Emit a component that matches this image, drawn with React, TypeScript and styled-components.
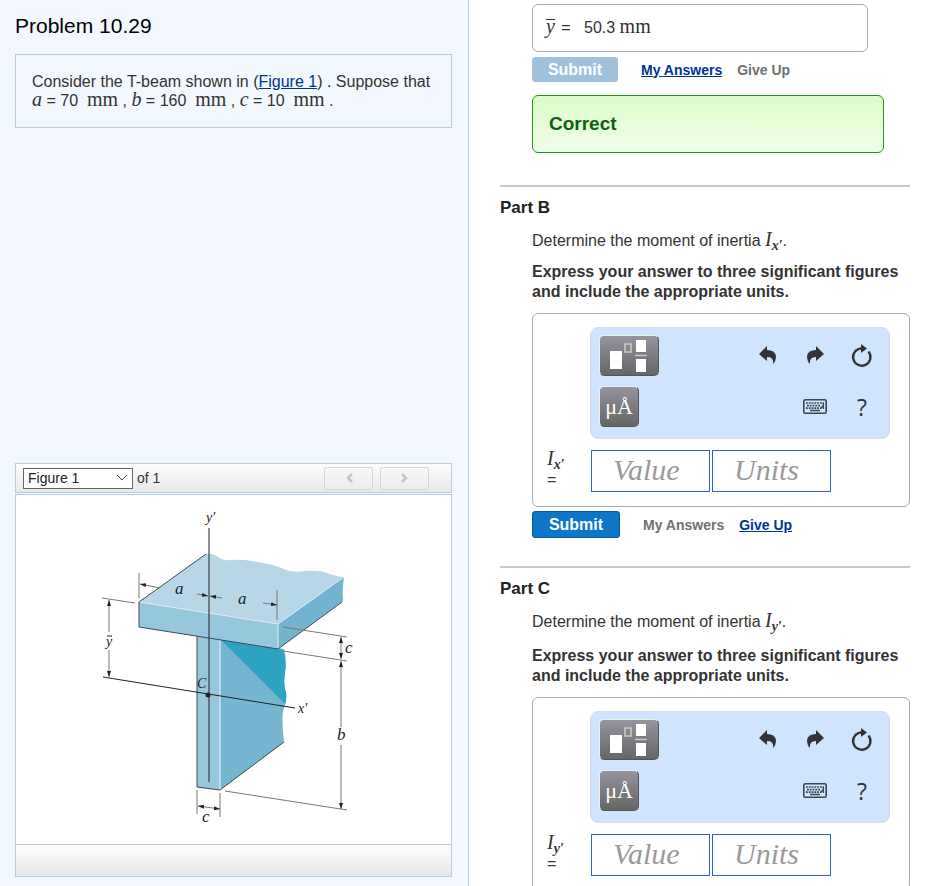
import React from "react";
import styled, { createGlobalStyle } from "styled-components";

const GlobalStyle = createGlobalStyle`
  *, *::before, *::after { box-sizing: border-box; }
  body {
    margin: 0;
    background: #fff;
    color: #333;
    font-family: "Liberation Sans", Arial, sans-serif;
    font-size: 16px;
    line-height: 20px;
  }
  button, input, select { font-family: inherit; margin: 0; }
  h1, h2, p { margin: 0; }
`;

const Page = styled.div`
  display: grid;
  grid-template-columns: minmax(0, 469fr) minmax(0, 463fr);
  height: 100vh;
  overflow: hidden;
`;

const ProblemPane = styled.aside`
  display: flex;
  flex-direction: column;
  justify-content: space-between;
  padding: 14px 16px 9px 15px;
  background: #f3f8fe;
  border-right: 1px solid #b8cbdd;
`;

const Title = styled.h1`
  color: #000;
  font-size: 21px;
  font-weight: 400;
  line-height: 24px;
`;

const Statement = styled.p`
  margin-top: 16px;
  padding: 17px 16px;
  border: 1px solid #b8cde0;
  line-height: 19px;
`;

const TextLink = styled.a`
  color: #039;
  text-decoration: underline;
`;

const Unit = styled.span`
  font-family: "Liberation Serif", "Times New Roman", serif;
  font-size: 20px;
  line-height: 0;
`;

const Variable = styled(Unit)`
  font-style: italic;
`;

const Subscript = styled.sub`
  font-size: 14px;
  font-weight: 700;
  line-height: 0;
  vertical-align: -4px;
`;

const Overlined = styled(Variable)`
  display: inline-block;
  margin-right: 2px;
  border-top: 1px solid #333;
  line-height: 13px;
`;

const Toolbar = styled.div`
  display: flex;
  align-items: center;
  height: 30px;
  margin-bottom: 1px;
  padding: 0 22px 0 7px;
  border: 1px solid #b8cde0;
  background: linear-gradient(#fdfdfd, #e8e8e8);
  font-size: 14px;
`;

const SelectWrap = styled.span`
  display: grid;
  align-items: center;
  width: 110px;
  margin-right: 4px;

  > * { grid-area: 1 / 1; }
  > svg { justify-self: end; margin-right: 5px; pointer-events: none; }
`;

const FigureSelect = styled.select`
  appearance: none;
  width: 100%;
  height: 21px;
  padding: 0 4px;
  border: 1px solid #666;
  border-radius: 0;
  background: #fff;
  color: #222;
  font-size: 14px;
`;

const Pager = styled.div`
  display: flex;
  gap: 7px;
  margin-left: auto;
`;

const PagerButton = styled.button`
  display: flex;
  align-items: center;
  justify-content: center;
  width: 49px;
  height: 23px;
  padding: 0;
  border: 1px solid #d8d8d8;
  border-radius: 2px;
  background: linear-gradient(#f8f8f8, #ededed);
`;

const Canvas = styled.div`
  border: 1px solid #b8cde0;
  background: #fff;

  svg { display: block; width: 100%; height: 349px; }
`;

const FigureFooter = styled.div`
  height: 32px;
  border: 1px solid #b8cde0;
  border-top: 0;
  background: linear-gradient(#fdfdfd, #e8e8e8);
`;

const WorkPane = styled.main`
  padding: 4px 22px 0 31px;
  overflow: hidden;
`;

const Indented = styled.div`
  margin-left: 32px;
`;

const GivenAnswer = styled.div`
  display: flex;
  align-items: baseline;
  max-width: 336px;
  height: 48px;
  padding: 13px;
  border: 1px solid #aaa;
  border-radius: 6px;
  white-space: pre;
`;

const Actions = styled.div<{ $gap: number }>`
  display: flex;
  align-items: center;
  gap: 15px;
  margin-top: ${(p) => p.$gap}px;
  font-size: 14px;
  font-weight: 700;
`;

const Submit = styled.button`
  width: 88px;
  height: 27px;
  margin-right: 8px;
  padding: 0;
  border: 1px solid #075a99;
  border-radius: 3px;
  background: #0e76c9;
  color: #fff;
  font-size: 16px;
  font-weight: 700;
  line-height: 20px;

  &:disabled {
    width: 86px;
    height: 25px;
    border-color: #9fc1db;
    background: #9fc1db;
  }
`;

const Muted = styled.span`
  color: #707070;
`;

const Feedback = styled.div`
  display: flex;
  align-items: center;
  max-width: 352px;
  height: 58px;
  margin-top: 13px;
  padding-left: 16px;
  border: 1px solid #1d9a1d;
  border-radius: 6px;
  background: linear-gradient(#dcfcc8, #f1fdea);
  color: #0d600d;
  font-size: 19px;
  font-weight: 700;
`;

const PartSection = styled.section<{ $gap: number }>`
  margin-top: ${(p) => p.$gap}px;
  border-top: 2px solid #c9c9c9;
`;

const PartTitle = styled.h2`
  margin-top: 11px;
  color: #222;
  font-size: 17px;
  line-height: 20px;
`;

const Prompt = styled.p<{ $after: number }>`
  margin-top: 13px;
  margin-bottom: ${(p) => p.$after}px;
`;

const Instruction = styled.p`
  font-weight: 700;
`;

const AnswerBox = styled.div`
  display: grid;
  grid-template-columns: 45px minmax(0, 300px);
  row-gap: 11px;
  margin-top: 11px;
  padding: 13px 19px 14px 12px;
  border: 1px solid #aaa;
  border-radius: 6px;
`;

const Palette = styled.div`
  display: flex;
  flex-direction: column;
  grid-column: 2;
  gap: 10px;
  height: 112px;
  padding: 7px 12px 7px 8px;
  border: 1px solid #d9dce2;
  border-radius: 8px;
  background: #cfe4fe;
`;

const PaletteRow = styled.div`
  display: flex;
  align-items: center;
`;

const Tools = styled.div`
  display: flex;
  gap: 17px;
  margin-left: auto;
`;

const PaletteButton = styled.button<{ $width: number }>`
  display: flex;
  align-items: center;
  justify-content: center;
  width: ${(p) => p.$width}px;
  height: 41px;
  padding: 0;
  border: 1px solid;
  border-color: #eee #555 #555 #eee;
  border-radius: 5px;
  background: linear-gradient(#96949f, #656565);
  color: #fff;
  font-family: "Liberation Serif", serif;
  font-size: 22px;
`;

const ToolButton = styled.button`
  display: flex;
  align-items: center;
  justify-content: center;
  width: 30px;
  height: 30px;
  padding: 0;
  border: 0;
  background: none;
  color: #333;
  font-family: "Open Sans", sans-serif;
  font-size: 23px;
  line-height: 28px;
`;

const Symbol = styled.label`
  padding-left: 2px;
`;

const SymbolLine = styled.span`
  display: block;
  line-height: 20px;
`;

const Fields = styled.div`
  display: flex;
  gap: 2px;
  padding-left: 1px;
`;

const Field = styled.input`
  width: 119px;
  min-width: 0;
  height: 42px;
  padding: 0 0 2px 21px;
  border: 1px solid #2e62c9;
  border-radius: 0;
  background: #fff;
  color: #333;
  font-family: "Liberation Serif", "Times New Roman", serif;
  font-size: 30px;
  font-style: italic;

  &::placeholder { color: #999; opacity: 1; }
`;

const Label = styled.text`
  fill: #222;
  font-family: "Liberation Serif", serif;
  font-style: italic;
  font-size: 17px;
`;

const SmallLabel = styled(Label)`
  font-size: 14px;
`;

const guides = [
  "M139 573V598", "M277 590V620", "M102 598 135 603", "M283 627 347 637",
  "M283 651 347 661", "M225 791 347 810", "M197 790V814", "M220 793V817",
];

const arrows = [
  "M160 588 140 584", "M197 594 208 596", "M222 598 210 596", "M263 603 277 605",
  "M109 632V600", "M109 650V677", "M341 727V661", "M341 745V809",
];

const doubleArrows = ["M341 637V659", "M198 806 220 809"];

function BeamFigure() {
  return (
    <svg viewBox="16 495 435 349" preserveAspectRatio="xMinYMid meet" role="img" aria-label="T-beam cross section">
      <defs>
        <marker id="arrow" viewBox="0 0 6 4" refX="6" refY="2" markerWidth="6" markerHeight="4" markerUnits="userSpaceOnUse" orient="auto-start-reverse">
          <path d="M0 0 6 2 0 4z" fill="#222" />
        </marker>
      </defs>
      <path d="M220 638 284 649Q287 658 285 672T286 692Q287 701 284 708T284 742L220 790z" fill="#76b5d0" />
      <path d="M221 640 283 650Q287 661 285 673T286 692Q287 699 285 704z" fill="#2ca3c1" />
      <path d="M197 635 220 639V790L197 787z" fill="#98c7dc" />
      <path d="M220 640V789" stroke="#bcdbe9" strokeWidth="2" />
      <path d="M197 636V787L220 790 284 742" fill="none" stroke="#3c4b55" />
      <path d="M139 602 206 554Q213 553 218 557 223 561 232 560 245 559 257 562 274 564 286 570 293 573 304 571 319 570 327 573 334 576 344 577L278 624z" fill="#b7d6e6" />
      <path d="M139 602 278 624V649L139 627z" fill="#97c7dc" />
      <path d="M278 624 344 577Q342 590 343 601L278 649z" fill="#73b3cf" />
      <path d="M139 602 278 624 344 577M278 624V648" fill="none" stroke="#dcecf4" />
      <path d="M206 554 139 602V627L278 649 342 602" fill="none" stroke="#3c4b55" />
      <path d="M209 528V782M103 677 295 708" stroke="#222" />
      <g stroke="#777">
        {guides.map((d) => <path key={d} d={d} />)}
        {arrows.map((d) => <path key={d} d={d} markerEnd="url(#arrow)" />)}
        {doubleArrows.map((d) => <path key={d} d={d} markerStart="url(#arrow)" markerEnd="url(#arrow)" />)}
      </g>
      <circle cx="208" cy="695" r="2.5" fill="#222" />
      <SmallLabel x="206" y="522">y′</SmallLabel>
      <Label x="175" y="594">a</Label>
      <Label x="238" y="604">a</Label>
      <SmallLabel x="106" y="646">y</SmallLabel>
      <path d="M107 636H112" stroke="#222" />
      <Label x="345" y="653">c</Label>
      <SmallLabel x="197" y="688">C</SmallLabel>
      <SmallLabel x="298" y="713">x′</SmallLabel>
      <Label x="337" y="740">b</Label>
      <Label x="202" y="822">c</Label>
    </svg>
  );
}

const arrowPath = "M0 8 8 0V4Q16 4 17 10 17 15 14 18 15 11 8 11V15z";

function UndoIcon() {
  return (
    <svg width="18" height="19" viewBox="0 0 18 19">
      <path d={arrowPath} fill="currentColor" />
    </svg>
  );
}

function RedoIcon() {
  return (
    <svg width="18" height="19" viewBox="0 0 18 19">
      <path d={arrowPath} fill="currentColor" transform="matrix(-1 0 0 1 18 0)" />
    </svg>
  );
}

function ResetIcon() {
  return (
    <svg width="22" height="24" viewBox="0 0 22 24">
      <path d="M17.5 7.5A8.7 8.7 0 1 1 11 4.3" fill="none" stroke="currentColor" strokeWidth="2.3" />
      <path d="M10 0 16 4.5 10 9z" fill="currentColor" />
    </svg>
  );
}

function KeyboardIcon() {
  return (
    <svg width="24" height="15" viewBox="0 0 24 15" fill="none" stroke="#3c444e">
      <rect x="0.8" y="0.8" width="22.4" height="13.4" rx="1.5" strokeWidth="1.6" />
      <path d="M3 4H21M4 6.7H18M3 9.2H21" strokeWidth="1.7" strokeDasharray="1.8 1" />
      <path d="M20.3 4V8H18M7 11.5H17" strokeWidth="1.5" />
    </svg>
  );
}

function TemplateIcon() {
  return (
    <svg width="38" height="32" viewBox="0 0 38 32">
      <path d="M0 11H12V29H0zM26 0H36V12H26zM26 19H36V32H26z" fill="#fff" />
      <path d="M25 15.5H37" stroke="#ccc" strokeWidth="1.5" />
      <rect x="15" y="4" width="6" height="8" fill="none" stroke="#ccc" strokeWidth="1.5" />
    </svg>
  );
}

function Chevron({ d }: { d: string }) {
  return (
    <svg width="8" height="12" viewBox="0 0 8 12" fill="none" stroke="#c6c6c6" strokeWidth="2.5">
      <path d={d} />
    </svg>
  );
}

function Inertia({ axis }: { axis: string }) {
  return (
    <Variable>
      I<Subscript>{axis}′</Subscript>
    </Variable>
  );
}

type PartProps = {
  name: string;
  axis: string;
  gap: number;
  after: number;
  children?: React.ReactNode;
};

function Part({ name, axis, gap, after, children }: PartProps) {
  const id = `value-${axis}`;
  return (
    <PartSection $gap={gap}>
      <PartTitle>Part {name}</PartTitle>
      <Indented>
        <Prompt $after={after}>
          Determine the moment of inertia <Inertia axis={axis} />.
        </Prompt>
        <Instruction>Express your answer to three significant figures and include the appropriate units.</Instruction>
        <AnswerBox>
          <Palette>
            <PaletteRow>
              <PaletteButton $width={60} aria-label="Templates"><TemplateIcon /></PaletteButton>
              <Tools>
                <ToolButton aria-label="Undo"><UndoIcon /></ToolButton>
                <ToolButton aria-label="Redo"><RedoIcon /></ToolButton>
                <ToolButton aria-label="Reset"><ResetIcon /></ToolButton>
              </Tools>
            </PaletteRow>
            <PaletteRow>
              <PaletteButton $width={40}>μÅ</PaletteButton>
              <Tools>
                <ToolButton aria-label="Keyboard shortcuts"><KeyboardIcon /></ToolButton>
                <ToolButton>?</ToolButton>
              </Tools>
            </PaletteRow>
          </Palette>
          <Symbol htmlFor={id}>
            <SymbolLine><Inertia axis={axis} /></SymbolLine>
            <SymbolLine>=</SymbolLine>
          </Symbol>
          <Fields>
            <Field id={id} placeholder="Value" />
            <Field placeholder="Units" aria-label="Units" />
          </Fields>
        </AnswerBox>
        {children}
      </Indented>
    </PartSection>
  );
}

export default function App() {
  return (
    <Page>
      <GlobalStyle />
      <ProblemPane>
        <div>
          <Title>Problem 10.29</Title>
          <Statement>
            Consider the T-beam shown in (<TextLink href="#figure">Figure 1</TextLink>) . Suppose that{" "}
            <Variable>a</Variable> = 70 &nbsp;<Unit>mm</Unit> , <Variable>b</Variable> = 160 &nbsp;<Unit>mm</Unit> ,{" "}
            <Variable>c</Variable> = 10 &nbsp;<Unit>mm</Unit> .
          </Statement>
        </div>
        <div id="figure">
          <Toolbar>
            <SelectWrap>
              <FigureSelect aria-label="Figure">
                <option>Figure 1</option>
              </FigureSelect>
              <svg width="12" height="8" viewBox="0 0 12 8" fill="none" stroke="#444">
                <path d="M1 1 6 6 11 1" />
              </svg>
            </SelectWrap>
            <span>of 1</span>
            <Pager>
              <PagerButton disabled aria-label="Previous figure"><Chevron d="M7 2 3 6 7 10" /></PagerButton>
              <PagerButton disabled aria-label="Next figure"><Chevron d="M1 2 5 6 1 10" /></PagerButton>
            </Pager>
          </Toolbar>
          <Canvas><BeamFigure /></Canvas>
          <FigureFooter />
        </div>
      </ProblemPane>
      <WorkPane>
        <Indented>
          <GivenAnswer><Overlined>y</Overlined> =   50.3 <Unit>mm</Unit></GivenAnswer>
          <Actions $gap={5}>
            <Submit disabled>Submit</Submit>
            <TextLink href="#answers">My Answers</TextLink>
            <Muted>Give Up</Muted>
          </Actions>
          <Feedback>Correct</Feedback>
        </Indented>
        <Part name="B" axis="x" gap={32} after={11}>
          <Actions $gap={4}>
            <Submit>Submit</Submit>
            <Muted>My Answers</Muted>
            <TextLink href="#give-up">Give Up</TextLink>
          </Actions>
        </Part>
        <Part name="C" axis="y" gap={28} after={14} />
      </WorkPane>
    </Page>
  );
}
